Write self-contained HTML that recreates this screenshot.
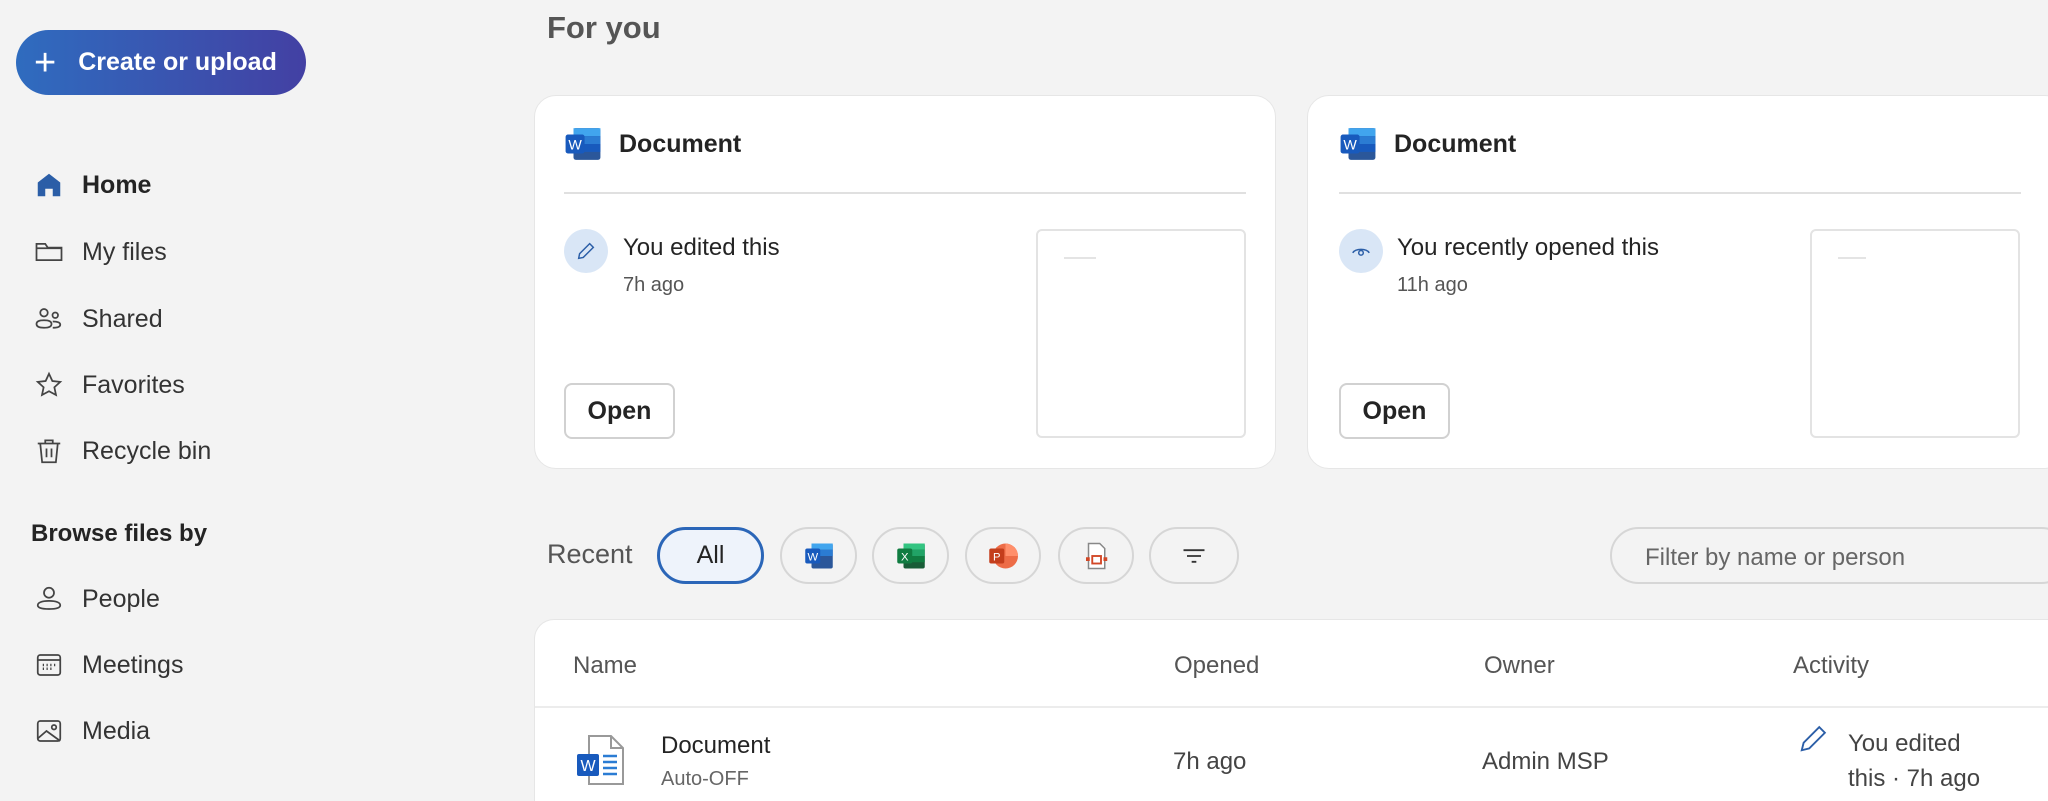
<!DOCTYPE html>
<html style="height:801px;overflow:hidden"><head><meta charset="utf-8">
<style>
*{box-sizing:border-box;margin:0;padding:0}
body{width:2048px;height:801px;background:#f3f3f3;font-family:"Liberation Sans",sans-serif;color:#242424;position:relative;overflow:hidden}
.a{position:absolute}
.nav{position:absolute;left:34px;font-size:25px;color:#333;display:flex;align-items:center;height:40px}
.nav svg{width:30px;height:30px;margin-right:18px}
.card{position:absolute;background:#fff;border:1px solid #e6e6e6;border-radius:22px}
.pill{position:absolute;top:527px;height:57px;border:2px solid #d6d6d6;border-radius:29px;display:flex;align-items:center;justify-content:center}
.hd{position:absolute;top:652px;font-size:24px;color:#555}
</style></head><body>

<div class="a" style="left:16px;top:30px;width:290px;height:65px;border-radius:33px;background:linear-gradient(90deg,#2f6cbf,#4340a3);color:#fff;font-size:25px;font-weight:bold;display:flex;align-items:center">
<span style="font-size:38px;font-weight:normal;margin-left:18px;margin-right:22px;line-height:1">+</span>Create or upload</div>

<div class="nav" style="top:165px;font-weight:bold;color:#242424"><svg viewBox="0 0 24 24"><path d="M12 3 3 10v11h6v-6h6v6h6V10z" fill="#2b5ea7"/></svg>Home</div>
<div class="nav" style="top:232px"><svg viewBox="0 0 24 24" fill="none" stroke="#444" stroke-width="1.4"><path d="M2 6.5v12h20V8.5H11L9 5.5H2z M2 9h20"/></svg>My files</div>
<div class="nav" style="top:299px"><svg viewBox="0 0 24 24" fill="none" stroke="#444" stroke-width="1.4"><circle cx="8" cy="7" r="3"/><path d="M2 16c0-2 2-3 6-3s6 1 6 3-2 3-6 3-6-1-6-3z"/><circle cx="17" cy="9" r="2.2"/><path d="M15 14c3 0 6 .5 6 2.5S18 19 15 19"/></svg>Shared</div>
<div class="nav" style="top:365px"><svg viewBox="0 0 24 24" fill="none" stroke="#444" stroke-width="1.4"><path d="M12 3l2.7 5.8 6.3.7-4.7 4.3 1.3 6.2L12 17l-5.6 3 1.3-6.2L3 9.5l6.3-.7z"/></svg>Favorites</div>
<div class="nav" style="top:431px"><svg viewBox="0 0 24 24" fill="none" stroke="#444" stroke-width="1.4"><path d="M3 6h18M9 6V3.5h6V6M5 6l1.5 15h11L19 6M10 10v7M14 10v7"/></svg>Recycle bin</div>
<div class="a" style="left:31px;top:520px;font-size:24px;font-weight:bold;color:#242424">Browse files by</div>
<div class="nav" style="top:579px"><svg viewBox="0 0 24 24" fill="none" stroke="#444" stroke-width="1.4"><circle cx="12" cy="7" r="4"/><path d="M3 17c0-2 3-3.5 9-3.5s9 1.5 9 3.5-3 3-9 3-9-1-9-3z"/></svg>People</div>
<div class="nav" style="top:645px"><svg viewBox="0 0 24 24" fill="none" stroke="#444" stroke-width="1.4"><rect x="3" y="4" width="18" height="16" rx="2"/><path d="M3 8h18"/><path d="M7 12h1M10 12h1M13 12h1M16 12h1M7 15h1M10 15h1M13 15h1" stroke-width="2"/></svg>Meetings</div>
<div class="nav" style="top:711px"><svg viewBox="0 0 24 24" fill="none" stroke="#444" stroke-width="1.4"><rect x="3" y="4" width="18" height="16" rx="2"/><path d="M3 18l7-6 11 8"/><circle cx="16" cy="9" r="1.8"/></svg>Media</div>

<div class="a" style="left:547px;top:10px;font-size:31px;font-weight:bold;color:#555">For you</div>

<div class="card" style="left:534px;top:95px;width:742px;height:374px"></div>
<div class="card" style="left:1307px;top:95px;width:760px;height:374px"></div>

<svg class="a" style="left:564px;top:125px" width="38" height="38" viewBox="0 0 24 24"><rect x="6" y="2" width="17" height="20" rx="1.5" fill="#2b579a"/><rect x="6" y="2" width="17" height="5" fill="#41a5ee"/><rect x="6" y="7" width="17" height="5" fill="#2b7cd3"/><rect x="6" y="12" width="17" height="5" fill="#185abd"/><rect x="1" y="6" width="12" height="12" rx="1.5" fill="#185abd"/><text x="7" y="15.5" font-size="9" fill="#fff" text-anchor="middle" font-family="Liberation Sans">W</text></svg>
<div class="a" style="left:619px;top:130px;font-size:25px;font-weight:bold">Document</div>
<div class="a" style="left:564px;top:192px;width:682px;height:2px;background:#e0e0e0"></div>
<div class="a" style="left:564px;top:229px;width:44px;height:44px;border-radius:50%;background:#d9e6f6"></div>
<svg class="a" style="left:575px;top:240px" width="22" height="22" viewBox="0 0 24 24" fill="none" stroke="#2b5ea7" stroke-width="1.6"><path d="M4 20l1-5L16 4l4 4L9 19z"/></svg>
<div class="a" style="left:623px;top:234px;font-size:24px">You edited this</div>
<div class="a" style="left:623px;top:274px;font-size:20px;color:#555">7h ago</div>
<div class="a" style="left:564px;top:383px;width:111px;height:56px;border:2px solid #d1d1d1;border-radius:8px;font-size:25px;font-weight:bold;display:flex;align-items:center;justify-content:center">Open</div>
<div class="a" style="left:1036px;top:229px;width:210px;height:209px;border:2px solid #e3e3e3;border-radius:6px;background:#fff"><div style="margin:26px 0 0 26px;width:32px;height:2px;background:#e4e4e4"></div></div>

<svg class="a" style="left:1339px;top:125px" width="38" height="38" viewBox="0 0 24 24"><rect x="6" y="2" width="17" height="20" rx="1.5" fill="#2b579a"/><rect x="6" y="2" width="17" height="5" fill="#41a5ee"/><rect x="6" y="7" width="17" height="5" fill="#2b7cd3"/><rect x="6" y="12" width="17" height="5" fill="#185abd"/><rect x="1" y="6" width="12" height="12" rx="1.5" fill="#185abd"/><text x="7" y="15.5" font-size="9" fill="#fff" text-anchor="middle" font-family="Liberation Sans">W</text></svg>
<div class="a" style="left:1394px;top:130px;font-size:25px;font-weight:bold">Document</div>
<div class="a" style="left:1339px;top:192px;width:682px;height:2px;background:#e0e0e0"></div>
<div class="a" style="left:1339px;top:229px;width:44px;height:44px;border-radius:50%;background:#d9e6f6"></div>
<svg class="a" style="left:1350px;top:240px" width="22" height="22" viewBox="0 0 24 24" fill="none" stroke="#2b5ea7" stroke-width="1.6"><path d="M3 14c3-5 15-5 18 0"/><circle cx="12" cy="14" r="2.5"/></svg>
<div class="a" style="left:1397px;top:234px;font-size:24px">You recently opened this</div>
<div class="a" style="left:1397px;top:274px;font-size:20px;color:#555">11h ago</div>
<div class="a" style="left:1339px;top:383px;width:111px;height:56px;border:2px solid #d1d1d1;border-radius:8px;font-size:25px;font-weight:bold;display:flex;align-items:center;justify-content:center">Open</div>
<div class="a" style="left:1810px;top:229px;width:210px;height:209px;border:2px solid #e3e3e3;border-radius:6px;background:#fff"><div style="margin:26px 0 0 26px;width:28px;height:2px;background:#e4e4e4"></div></div>

<div class="a" style="left:547px;top:539px;font-size:27px;color:#555">Recent</div>
<div class="pill" style="left:657px;width:107px;border:3px solid #2b66b8;background:#eef3fb;font-size:25px">All</div>
<div class="pill" style="left:780px;width:77px"><svg width="30" height="30" viewBox="0 0 24 24"><rect x="6" y="2" width="17" height="20" rx="1.5" fill="#2b579a"/><rect x="6" y="2" width="17" height="5" fill="#41a5ee"/><rect x="6" y="7" width="17" height="5" fill="#2b7cd3"/><rect x="1" y="6" width="12" height="12" rx="1.5" fill="#185abd"/><text x="7" y="15.5" font-size="9" fill="#fff" text-anchor="middle" font-family="Liberation Sans">W</text></svg></div>
<div class="pill" style="left:872px;width:77px"><svg width="30" height="30" viewBox="0 0 24 24"><rect x="6" y="2" width="17" height="20" rx="1.5" fill="#185c37"/><rect x="6" y="2" width="17" height="5" fill="#33c481"/><rect x="6" y="7" width="17" height="5" fill="#21a366"/><rect x="6" y="12" width="17" height="5" fill="#107c41"/><rect x="1" y="6" width="12" height="12" rx="1.5" fill="#107c41"/><text x="7" y="15.5" font-size="9" fill="#fff" text-anchor="middle" font-family="Liberation Sans">X</text></svg></div>
<div class="pill" style="left:965px;width:76px"><svg width="30" height="30" viewBox="0 0 24 24"><circle cx="14" cy="12" r="10" fill="#ed6c47"/><path d="M14 2a10 10 0 0 1 10 10H14z" fill="#ff8f6b"/><rect x="1" y="6" width="12" height="12" rx="1.5" fill="#c43e1c"/><text x="7" y="15.5" font-size="9" fill="#fff" text-anchor="middle" font-family="Liberation Sans">P</text></svg></div>
<div class="pill" style="left:1058px;width:76px"><svg width="30" height="30" viewBox="0 0 24 24" fill="none"><path d="M6 2h9l4 4v16H6z" stroke="#888" stroke-width="1.2" fill="#fff"/><rect x="9" y="12" width="7" height="6" stroke="#d24726" stroke-width="1.5"/><rect x="4" y="13" width="3" height="3" fill="#d24726"/><rect x="18" y="13" width="3" height="3" fill="#d24726"/></svg></div>
<div class="pill" style="left:1149px;width:90px"><svg width="28" height="28" viewBox="0 0 24 24" stroke="#333" stroke-width="1.6"><path d="M3 7h18M6 12h12M10 17h4"/></svg></div>
<div class="a" style="left:1610px;top:527px;width:460px;height:57px;border:2px solid #d6d6d6;border-radius:29px;font-size:24px;color:#666;padding:15px 0 0 33px">Filter by name or person</div>

<div class="card" style="left:534px;top:619px;width:1540px;height:182px;border-radius:20px 20px 0 0;border-bottom:none"></div>
<div class="hd" style="left:573px">Name</div>
<div class="hd" style="left:1174px">Opened</div>
<div class="hd" style="left:1484px">Owner</div>
<div class="hd" style="left:1793px">Activity</div>
<div class="a" style="left:535px;top:706px;width:1513px;height:2px;background:#ececec"></div>
<svg class="a" style="left:573px;top:732px" width="56" height="56" viewBox="0 0 28 28"><path d="M8 2h11l6 6v18H8z" fill="#fff" stroke="#999" stroke-width="1"/><path d="M19 2v6h6" fill="none" stroke="#999"/><rect x="2" y="11" width="11" height="11" rx="1" fill="#185abd"/><text x="7.5" y="19.5" font-size="8" fill="#fff" text-anchor="middle" font-family="Liberation Sans">W</text><path d="M15 12h7M15 15h7M15 18h7M15 21h7" stroke="#2b7cd3" stroke-width="1.2"/></svg>
<div class="a" style="left:661px;top:732px;font-size:24px">Document</div>
<div class="a" style="left:661px;top:768px;font-size:20px;color:#666">Auto-OFF</div>
<div class="a" style="left:1173px;top:748px;font-size:24px;color:#444">7h ago</div>
<div class="a" style="left:1482px;top:748px;font-size:24px;color:#444">Admin MSP</div>
<svg class="a" style="left:1798px;top:724px" width="30" height="30" viewBox="0 0 24 24" fill="none" stroke="#2b5ea7" stroke-width="1.5"><path d="M3 21l1.5-6L17 2.5l4.5 4.5L9 19.5z"/></svg>
<div class="a" style="left:1848px;top:730px;font-size:24px;color:#444">You edited</div>
<div class="a" style="left:1848px;top:765px;font-size:24px;color:#444">this · 7h ago</div>
</body></html>
